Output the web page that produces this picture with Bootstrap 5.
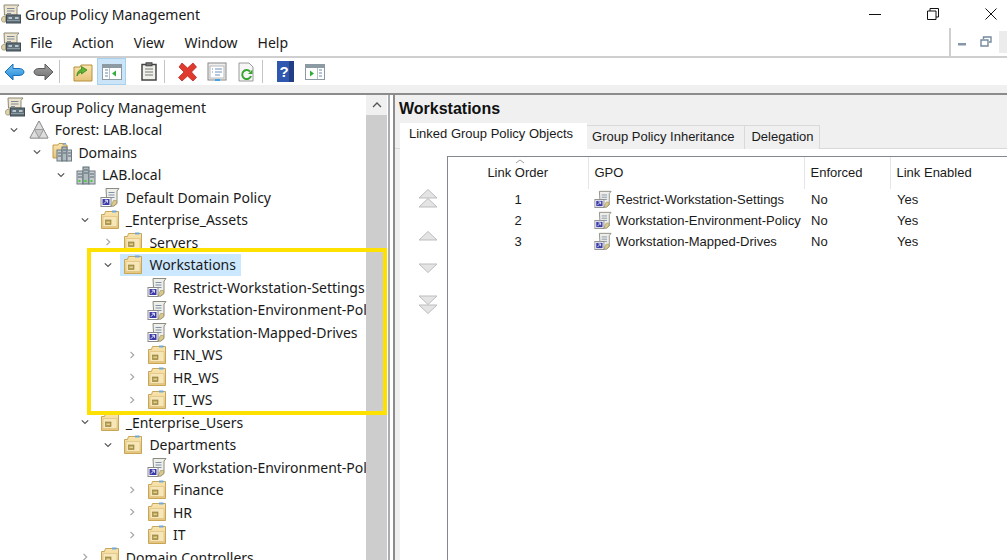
<!DOCTYPE html>
<html lang="en">
<head>
<meta charset="UTF-8" />
<title>Group Policy Management</title>
<link href="https://cdn.jsdelivr.net/npm/bootstrap@5.3.2/dist/css/bootstrap.min.css" rel="stylesheet" />
<style>
  html, body { height: 100%; overflow: hidden; }
  body { font-family: "Noto Sans", sans-serif; font-size: 14px; color: #1a1a1a; background: #fff; }
  .app { width: 1007px; height: 560px; position: relative; overflow: hidden; }
  .title-bar { height: 28px; padding-left: 1px; }
  .title-bar .name { margin-left: 4px; font-size: 14px; }
  .win-btns { margin-right: -13px; }
  .win-btn { width: 58px; height: 26px; }
  .menu-bar { height: 30px; padding-left: 1px; border-bottom: 2px solid #cfcfcf; }
  .menu-bar a { color: #1a1a1a; text-decoration: none; }
  .menu-items { margin-left: 9px; gap: 20px; padding-top: 1px; }
  .mdi-box { border-left: 2px solid #cfcfcf; margin-bottom: -2px; height: 30px; padding-top: 3px; gap: 2px; align-self: flex-end; }
  .mdi-btn { width: 22px; height: 22px; background: #fff; }
  .mdi-btn.cut { width: 8px; background: #ececec; }
  .tool-bar { height: 27px; }
  .tool { width: 29px; height: 27px; }
  .tool.on { background: #cce4f7; border: 1px solid #a8d1f0; }
  .tool-sep { width: 1px; height: 23px; background: #c4c4c4; margin: 0 8px 0 1px; }
  .tool-sep.wide { margin: 0 8px 0 2px; }
  .gap-strip { height: 10px; background: #f0f0f0; border-bottom: 2px solid #8c8c8c; }
  .panes { height: 465px; }
  .left-pane { width: 390px; border-right: 2px solid #a9adb2; flex: none; }
  .tree { width: 366px; padding-top: 1px; overflow: hidden; flex: none; }
  .scroll-track { width: 21px; background: #cdcdcd; flex: none; }
  .scroll-up { height: 20px; background: #f0f0f0; }
  .splitter { width: 3px; background: #fff; flex: none; }
  .tree-row { height: 22.5px; white-space: nowrap; width: max-content; }
  .lv0 { margin-left: -15px; }
  .lv1 { margin-left: 8.7px; }
  .lv2 { margin-left: 32.4px; }
  .lv3 { margin-left: 56px; }
  .lv4 { margin-left: 79.7px; }
  .lv5 { margin-left: 103.4px; }
  .lv6 { margin-left: 127px; }
  .caret-box { width: 20px; padding-left: 1px; flex: none; line-height: 0; }
  .node-ico { width: 20px; height: 20px; margin-right: 6px; flex: none; }
  .pick-bg { background: #cce8ff; height: 22px; padding: 0 5px 0 3px; margin-left: -3px; }
  .right-pane { min-width: 0; font-family: "Liberation Sans", sans-serif; font-size: 13px; background: #f0f0f0; border-left: 2px solid #8c8c8c; }
  .scope-title { height: 28px; font-size: 16px; font-weight: 700; padding: 4px 0 0 4px; color: #111; line-height: 20px; }
  .nav-tabs.gpm-tabs { padding-left: 5px; border-bottom: 1px solid #d9d9d9; height: 26px; --bs-nav-tabs-border-radius: 0; }
  .gpm-tabs .nav-link { color: #1a1a1a; font-size: 13px; padding: 1px 10px 0 5px; height: 24px; margin-top: 2px; border: 1px solid #d9d9d9; border-left: 0; border-bottom: 0; background: #f0f0f0; margin-bottom: 0; line-height: 20px; white-space: nowrap; }
  .gpm-tabs .nav-link.last-tab { padding: 1px 5px 0 6px; }
  .gpm-tabs .nav-link.active { background: #fff; color: #1a1a1a; height: 27px; margin-top: 0; padding: 1px 14px 0 9px; border: 0; position: relative; z-index: 1; }
  .tab-body { background: #fff; height: 411px; padding: 7px 0 0 9px; margin-left: 5px; }
  .order-btns { width: 38px; padding-top: 32px; flex: none; }
  .order-btns svg { display: block; margin-bottom: 20px; }
  .gpo-list { border: 1px solid #828790; border-right: 0; border-bottom: 0; height: 405px; }
  .gpo-table { table-layout: fixed; width: 559px; margin: 0; --bs-table-border-color: transparent; }
  .gpo-table th { font-weight: 400; height: 32px; padding: 0 0 0 6px; position: relative; border-right: 1px solid #e5e5e5; vertical-align: middle; font-size: 13px; color: #1a1a1a; }
  .gpo-table td { padding: 0 0 0 7px; height: 21px; vertical-align: middle; line-height: 20px; white-space: nowrap; color: #1a1a1a; }
  .gpo-table th.num, .gpo-table td.num { text-align: center; padding-left: 0; }
  .gpo-table td.gpo-name { padding-left: 6px; }
  .sort-mark { position: absolute; left: 67px; top: 2px; }
  .cell-ico { width: 18px; height: 18px; margin-right: 4px; vertical-align: -4px; }
  .callout { position: absolute; left: 87px; top: 248px; width: 300px; height: 167px; border: 4px solid #ffe100; pointer-events: none; }
</style>
</head>
<body>
<svg width="0" height="0" class="position-absolute">
  <defs>
    <linearGradient id="fold" x1="0" y1="0" x2="0" y2="1"><stop offset="0" stop-color="#f9e6b0"/><stop offset="1" stop-color="#e6c47a"/></linearGradient>
    <linearGradient id="blueArrow" x1="0" y1="0" x2="0" y2="1"><stop offset="0" stop-color="#7cc6f2"/><stop offset="1" stop-color="#1f86d6"/></linearGradient>
    <linearGradient id="grayArrow" x1="0" y1="0" x2="0" y2="1"><stop offset="0" stop-color="#a4a4a4"/><stop offset="1" stop-color="#6e6e6e"/></linearGradient>
    <symbol id="scroll" viewBox="0 0 20 20">
      <path d="M3 1h15l-2 2.500V11H3.500z" fill="#ece4cc" stroke="#8d8a78"/>
      <path d="M6 4.500h7.500M6 7h7.500M6 9.500h4" stroke="#7d8a99"/>
      <path d="M0.500 15.500c0-2.500 1.800-3.500 4-3.500v6H2.500C1.200 18 .5 17 .5 15.500z" fill="#ddd2ab" stroke="#a39c7f"/>
      <rect x="5.500" y="11" width="14" height="8" fill="#5f6f78" stroke="#3f4a52"/>
      <rect x="7.500" y="13" width="3.500" height="2" fill="#b9c6cf"/><rect x="14" y="13" width="3.500" height="2" fill="#b9c6cf"/>
      <path d="M6 16.500h13" stroke="#8c9aa3"/>
    </symbol>
    <symbol id="forest" viewBox="0 0 20 20">
      <path d="M10 1l9 17H1z" fill="#c9c9c9" stroke="#8a8a8a"/>
      <path d="M10 1l4.500 8.500h-9zM5.500 9.500L10 18H1zM14.500 9.500L19 18h-9z" fill="#dedede" stroke="#8f8f8f" stroke-width=".8"/>
    </symbol>
    <symbol id="srv" viewBox="0 0 20 20">
      <rect x="1" y="6" width="6" height="13" fill="#c5ccd0" stroke="#6d7a82"/>
      <rect x="7" y="2" width="6" height="17" fill="#aebabf" stroke="#5f6d75"/>
      <rect x="13" y="6" width="6" height="13" fill="#c5ccd0" stroke="#6d7a82"/>
      <path d="M2 9h4M8 5h4M8 8h4M14 9h4M2 12h4M14 12h4" stroke="#59666e"/>
      <path d="M2.500 16h2M8.500 16h2M14.500 16h2" stroke="#44cc33" stroke-width="2"/>
    </symbol>
    <symbol id="domains" viewBox="0 0 20 20">
      <path d="M1 3h5l1-1.500h4V3h4v13H1z" fill="url(#fold)" stroke="#c49a4a"/>
      <rect x="11" y="1" width="3" height="1.500" fill="#6fa8d8"/>
      <rect x="5" y="8" width="5" height="11" fill="#c5ccd0" stroke="#6d7a82"/>
      <rect x="10" y="5" width="5" height="14" fill="#aebabf" stroke="#5f6d75"/>
      <rect x="15" y="8" width="4.500" height="11" fill="#c5ccd0" stroke="#6d7a82"/>
      <path d="M6 11h3M11 8h3M11 11h3M16 11h3M6 14h3M16 14h3" stroke="#59666e"/>
    </symbol>
    <symbol id="ou" viewBox="0 0 20 20">
      <path d="M1.500 4.500h3l1-3h13v17h-17z" fill="url(#fold)" stroke="#c9a557"/>
      <path d="M3 6.500h14v10H3z" fill="#f6e6b8" stroke="#dcc080" stroke-width=".7"/>
      <rect x="12" y=".5" width="4.500" height="2" fill="#6fa8d8"/>
      <rect x="5.500" y="10" width="5.500" height="4.500" fill="#b39c50" stroke="#8f7c3a" stroke-width=".6"/>
      <path d="M6.500 12.200h3.500" stroke="#f0e8b0"/>
    </symbol>
    <symbol id="gpo" viewBox="0 0 20 20">
      <path d="M6 1.500h13l-2 2.500v12.500L14 19H7z" fill="#eeeeea" stroke="#8b8b80"/>
      <path d="M8.500 5.500h6M8.500 8h6M8.500 10.500h6" stroke="#8092a8"/>
      <path d="M13.500 13.500h3v3l-3 2.500h-2.500z" fill="#d9c98d" stroke="#a89a63" stroke-width=".7"/>
      <rect x="1" y="10.500" width="10" height="9" fill="#fff" stroke="#8a8a8a"/>
      <rect x="2.500" y="12" width="7" height="6" fill="#3a3aa8"/>
      <path d="M3.800 16.800l3.400-3.400M4.800 13.200h2.600v2.600" stroke="#fff" stroke-width=".9" fill="none"/>
    </symbol>
    <symbol id="up1" viewBox="0 0 20 12"><path d="M10 1.500L19 10H1z" fill="#e4e4e4" stroke="#bdbdbd"/></symbol>
    <symbol id="down1" viewBox="0 0 20 12"><path d="M10 10.500L19 2H1z" fill="#e4e4e4" stroke="#bdbdbd"/></symbol>
    <symbol id="chev-d" viewBox="0 0 8 8"><path d="M.8 2.300L4 5.500l3.200-3.200" fill="none" stroke="#555" stroke-width="1.200"/></symbol>
    <symbol id="chev-r" viewBox="0 0 8 8"><path d="M2.500.8L5.700 4 2.500 7.200" fill="none" stroke="#a6a6a6" stroke-width="1.200"/></symbol>
  </defs>
</svg>

<div class="app">
  <div class="title-bar d-flex align-items-center">
    <svg width="20" height="20"><use href="#scroll"/></svg>
    <span class="name">Group Policy Management</span>
    <div class="win-btns ms-auto d-flex">
      <div class="win-btn d-flex align-items-center justify-content-center"><svg width="12" height="12"><path d="M0 6.500h12" stroke="#111"/></svg></div>
      <div class="win-btn d-flex align-items-center justify-content-center"><svg width="12" height="12"><path d="M.5 3h8.500v8.500H.5zM3 3V.5h8.500V9H9" fill="none" stroke="#111"/></svg></div>
      <div class="win-btn d-flex align-items-center justify-content-center"><svg width="12" height="12"><path d="M.5.5l11 11M11.500.5l-11 11" stroke="#111"/></svg></div>
    </div>
  </div>

  <div class="menu-bar d-flex align-items-center">
    <svg width="20" height="20"><use href="#scroll"/></svg>
    <div class="menu-items d-flex">
      <a href="#">File</a><a href="#">Action</a><a href="#">View</a><a href="#">Window</a><a href="#">Help</a>
    </div>
    <div class="mdi-box ms-auto d-flex">
      <div class="mdi-btn d-flex align-items-center justify-content-center"><svg width="10" height="10"><rect x="1" y="6" width="8" height="2.500" fill="#8496a8"/></svg></div>
      <div class="mdi-btn d-flex align-items-center justify-content-center"><svg width="12" height="12"><path d="M3.500 3V1h7.500v5H9M1 4h7v6H1z" fill="none" stroke="#76899c" stroke-width="1.400"/></svg></div>
      <div class="mdi-btn cut"></div>
    </div>
  </div>

  <div class="tool-bar d-flex align-items-center">
    <div class="tool d-flex align-items-center justify-content-center"><svg width="21" height="18"><path d="M1 9l8-8v4.500h6c2 0 5 1 5 3.500s-3 3.500-5 3.500H9V17z" fill="url(#blueArrow)" stroke="#1a70b8"/></svg></div>
    <div class="tool d-flex align-items-center justify-content-center"><svg width="21" height="18"><path d="M20 9l-8-8v4.500H6c-2 0-5 1-5 3.500s3 3.500 5 3.500h6V17z" fill="url(#grayArrow)" stroke="#5c5c5c"/></svg></div>
    <div class="tool-sep"></div>
    <div class="tool d-flex align-items-center justify-content-center"><svg width="20" height="20"><path d="M1 5h6l1-2h11v16H1z" fill="url(#fold)" stroke="#b58f3e"/><path d="M4 14c0-4 2-6 4.500-6.500V4.500L14 8l-5.500 4V10C6.500 10.500 5 12 4 14z" fill="#5fb336" stroke="#39861c" stroke-width=".8"/></svg></div>
    <div class="tool on d-flex align-items-center justify-content-center"><svg width="20" height="16"><rect x=".5" y=".5" width="19" height="15" fill="#fff" stroke="#8c9aa3"/><rect x="1" y="1" width="18" height="3" fill="#8c9aa3"/><path d="M3 6h3M3 9h3M3 12h3" stroke="#6a8bb0"/><path d="M7.500 4v11" stroke="#b7c0c6"/><path d="M14 6.500v6l-4-3z" fill="#2fae3a"/></svg></div>
    <div class="tool ms-2 d-flex align-items-center justify-content-center"><svg width="16" height="19"><rect x="1" y="2.500" width="14" height="15.500" fill="#f0f0ea" stroke="#444" stroke-width="1.500"/><rect x="5" y=".8" width="6" height="3" fill="#777" stroke="#444"/><path d="M4 7h8M4 10h8M4 13h8" stroke="#777"/></svg></div>
    <div class="tool-sep"></div>
    <div class="tool d-flex align-items-center justify-content-center"><svg width="21" height="20"><path d="M2 5l3-4 5.500 5L16 1l3.500 4-5 5 5 5.500-3.500 3.500-5.500-5L5 19l-3.500-3.500 5.500-5.500z" fill="#e03a2e" stroke="#b02018" stroke-width=".7"/></svg></div>
    <div class="tool d-flex align-items-center justify-content-center"><svg width="20" height="20"><rect x="1" y="1" width="18" height="17" fill="#efefef" stroke="#888"/><rect x="3" y="4" width="14" height="12" fill="#fff" stroke="#b8b8b8"/><path d="M8 7h7M8 10h7M8 13h5M5 7h1M5 10h1" stroke="#6c8ebf"/><rect x="8" y="17" width="5" height="2" fill="#3fa3e6"/></svg></div>
    <div class="tool d-flex align-items-center justify-content-center"><svg width="18" height="20"><path d="M2 1h10l4 4v14H2z" fill="#f6f6f6" stroke="#9a9a9a"/><path d="M13 9.500a4.500 4.500 0 1 0 1 4.500" fill="none" stroke="#3aa335" stroke-width="2"/><path d="M15.500 7.500v4.500h-4.500z" fill="#3aa335"/></svg></div>
    <div class="tool-sep wide"></div>
    <div class="tool d-flex align-items-center justify-content-center"><svg width="17" height="21"><rect width="17" height="21" fill="#2f57b0"/><rect x="12" width="5" height="21" fill="#223f85"/><text x="7" y="16" font-family="Liberation Sans" font-weight="700" font-size="15" fill="#fff" text-anchor="middle">?</text></svg></div>
    <div class="tool d-flex align-items-center justify-content-center"><svg width="20" height="16"><rect x=".5" y=".5" width="19" height="15" fill="#fff" stroke="#8c9aa3"/><rect x="1" y="1" width="18" height="3" fill="#8c9aa3"/><path d="M14 6h3M14 9h3M14 12h3" stroke="#6a8bb0"/><path d="M12.500 4v11" stroke="#b7c0c6"/><path d="M5 6.500v6l4-3z" fill="#2fae3a"/></svg></div>
  </div>
  <div class="gap-strip"></div>

  <div class="panes d-flex">
    <div class="left-pane d-flex">
      <div class="tree">
        <div class="tree-row d-flex align-items-center lv0"><span class="caret-box"></span><svg class="node-ico"><use href="#scroll"/></svg><span>Group Policy Management</span></div>
        <div class="tree-row d-flex align-items-center lv1"><span class="caret-box"><svg width="8" height="8"><use href="#chev-d"/></svg></span><svg class="node-ico"><use href="#forest"/></svg><span>Forest: LAB.local</span></div>
        <div class="tree-row d-flex align-items-center lv2"><span class="caret-box"><svg width="8" height="8"><use href="#chev-d"/></svg></span><svg class="node-ico"><use href="#domains"/></svg><span>Domains</span></div>
        <div class="tree-row d-flex align-items-center lv3"><span class="caret-box"><svg width="8" height="8"><use href="#chev-d"/></svg></span><svg class="node-ico"><use href="#srv"/></svg><span>LAB.local</span></div>
        <div class="tree-row d-flex align-items-center lv4"><span class="caret-box"></span><svg class="node-ico"><use href="#gpo"/></svg><span>Default Domain Policy</span></div>
        <div class="tree-row d-flex align-items-center lv4"><span class="caret-box"><svg width="8" height="8"><use href="#chev-d"/></svg></span><svg class="node-ico"><use href="#ou"/></svg><span>_Enterprise_Assets</span></div>
        <div class="tree-row d-flex align-items-center lv5"><span class="caret-box"><svg width="8" height="8"><use href="#chev-r"/></svg></span><svg class="node-ico"><use href="#ou"/></svg><span>Servers</span></div>
        <div class="tree-row d-flex align-items-center lv5"><span class="caret-box"><svg width="8" height="8"><use href="#chev-d"/></svg></span><span class="pick-bg d-flex align-items-center"><svg class="node-ico"><use href="#ou"/></svg><span>Workstations</span></span></div>
        <div class="tree-row d-flex align-items-center lv6"><span class="caret-box"></span><svg class="node-ico"><use href="#gpo"/></svg><span>Restrict-Workstation-Settings</span></div>
        <div class="tree-row d-flex align-items-center lv6"><span class="caret-box"></span><svg class="node-ico"><use href="#gpo"/></svg><span>Workstation-Environment-Policy</span></div>
        <div class="tree-row d-flex align-items-center lv6"><span class="caret-box"></span><svg class="node-ico"><use href="#gpo"/></svg><span>Workstation-Mapped-Drives</span></div>
        <div class="tree-row d-flex align-items-center lv6"><span class="caret-box"><svg width="8" height="8"><use href="#chev-r"/></svg></span><svg class="node-ico"><use href="#ou"/></svg><span>FIN_WS</span></div>
        <div class="tree-row d-flex align-items-center lv6"><span class="caret-box"><svg width="8" height="8"><use href="#chev-r"/></svg></span><svg class="node-ico"><use href="#ou"/></svg><span>HR_WS</span></div>
        <div class="tree-row d-flex align-items-center lv6"><span class="caret-box"><svg width="8" height="8"><use href="#chev-r"/></svg></span><svg class="node-ico"><use href="#ou"/></svg><span>IT_WS</span></div>
        <div class="tree-row d-flex align-items-center lv4"><span class="caret-box"><svg width="8" height="8"><use href="#chev-d"/></svg></span><svg class="node-ico"><use href="#ou"/></svg><span>_Enterprise_Users</span></div>
        <div class="tree-row d-flex align-items-center lv5"><span class="caret-box"><svg width="8" height="8"><use href="#chev-d"/></svg></span><svg class="node-ico"><use href="#ou"/></svg><span>Departments</span></div>
        <div class="tree-row d-flex align-items-center lv6"><span class="caret-box"></span><svg class="node-ico"><use href="#gpo"/></svg><span>Workstation-Environment-Policy</span></div>
        <div class="tree-row d-flex align-items-center lv6"><span class="caret-box"><svg width="8" height="8"><use href="#chev-r"/></svg></span><svg class="node-ico"><use href="#ou"/></svg><span>Finance</span></div>
        <div class="tree-row d-flex align-items-center lv6"><span class="caret-box"><svg width="8" height="8"><use href="#chev-r"/></svg></span><svg class="node-ico"><use href="#ou"/></svg><span>HR</span></div>
        <div class="tree-row d-flex align-items-center lv6"><span class="caret-box"><svg width="8" height="8"><use href="#chev-r"/></svg></span><svg class="node-ico"><use href="#ou"/></svg><span>IT</span></div>
        <div class="tree-row d-flex align-items-center lv4"><span class="caret-box"><svg width="8" height="8"><use href="#chev-r"/></svg></span><svg class="node-ico"><use href="#ou"/></svg><span>Domain Controllers</span></div>
      </div>
      <div class="scroll-track">
        <div class="scroll-up d-flex align-items-center justify-content-center"><svg width="10" height="8"><path d="M1 6l4-4 4 4" fill="none" stroke="#555" stroke-width="1.300"/></svg></div>
      </div>
    </div>
    <div class="splitter"></div>
    <div class="right-pane flex-grow-1">
      <div class="scope-title">Workstations</div>
      <ul class="nav nav-tabs gpm-tabs">
        <li class="nav-item"><a class="nav-link active" href="#">Linked Group Policy Objects</a></li>
        <li class="nav-item"><a class="nav-link" href="#">Group Policy Inheritance</a></li>
        <li class="nav-item"><a class="nav-link last-tab" href="#">Delegation</a></li>
      </ul>
      <div class="tab-body d-flex">
        <div class="order-btns d-flex flex-column align-items-center">
          <svg width="20" height="22" viewBox="0 0 20 22"><use href="#up1" width="20" height="12"/><use href="#up1" y="9" width="20" height="12"/></svg>
          <svg width="20" height="12"><use href="#up1"/></svg>
          <svg width="20" height="12"><use href="#down1"/></svg>
          <svg width="20" height="22" viewBox="0 0 20 22"><use href="#down1" width="20" height="12"/><use href="#down1" y="9" width="20" height="12"/></svg>
        </div>
        <div class="gpo-list flex-grow-1">
          <table class="table table-borderless gpo-table">
            <colgroup><col style="width:140px"><col style="width:216px"><col style="width:86px"><col style="width:117px"></colgroup>
            <thead>
              <tr>
                <th class="num"><svg class="sort-mark" width="10" height="5"><path d="M1 4l4-3 4 3" fill="none" stroke="#a0a0a0"/></svg>Link Order</th>
                <th>GPO</th>
                <th>Enforced</th>
                <th class="border-0">Link Enabled</th>
              </tr>
            </thead>
            <tbody>
              <tr><td class="num">1</td><td class="gpo-name"><svg class="cell-ico"><use href="#gpo"/></svg>Restrict-Workstation-Settings</td><td>No</td><td>Yes</td></tr>
              <tr><td class="num">2</td><td class="gpo-name"><svg class="cell-ico"><use href="#gpo"/></svg>Workstation-Environment-Policy</td><td>No</td><td>Yes</td></tr>
              <tr><td class="num">3</td><td class="gpo-name"><svg class="cell-ico"><use href="#gpo"/></svg>Workstation-Mapped-Drives</td><td>No</td><td>Yes</td></tr>
            </tbody>
          </table>
        </div>
      </div>
    </div>
  </div>

  <div class="callout"></div>
</div>
<script src="https://cdn.jsdelivr.net/npm/bootstrap@5.3.2/dist/js/bootstrap.bundle.min.js"></script>
</body>
</html>
